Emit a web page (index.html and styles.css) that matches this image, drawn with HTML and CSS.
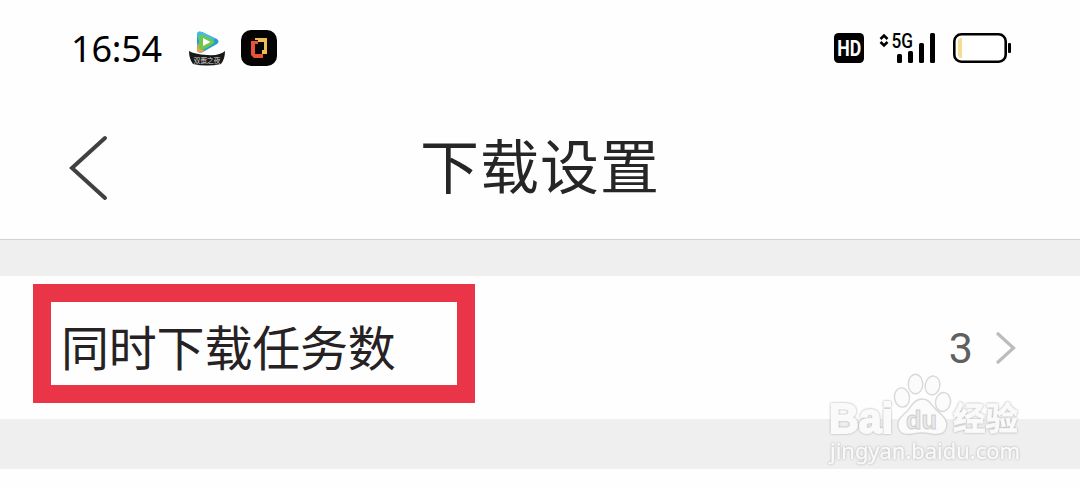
FILE: index.html
```html
<!DOCTYPE html>
<html lang="zh-CN">
<head>
<meta charset="utf-8">
<title>下载设置</title>
<link rel="stylesheet" href="styles.css">
</head>
<body>
<div class="screen">
  <header class="header">
    <div class="status">
      <div class="status-left">
        <span class="time">16:54</span>
        <svg class="app-video" width="40" height="36" viewBox="0 0 40 36">
          <path d="M10 4Q10 -1 15 1L30 8Q33 10.500 30 13L15 21.500Q10 23 10 18Z" fill="#279bd5"/>
          <path d="M10 5Q10 0 15 1L29 8L13 12Z" fill="#42bfe0"/>
          <path d="M11 12L17 20L14 21.500Q10 22 10 18Z" fill="#f1a23d"/>
          <path d="M12 6Q12 3 16 4L27 9.500Q28 11 26 13L18 18Q12 20 12 16Z" fill="#70c64c"/>
          <path d="M16 7L23.500 11L16 15Z" fill="#fff"/>
          <path d="M2 20Q7 23 20 24T38 20Q38 28 34 33Q20 36 6 33Q2 28 2 20Z" fill="#17171a"/>
          <text class="badge-text" x="6.500" y="32" textLength="27">双蛋之夜</text>
        </svg>
        <svg class="app-door" width="36" height="36" viewBox="0 0 36 36">
          <rect width="36" height="36" rx="10" fill="#060303"/>
          <path d="M14 8H26V24H21V20H23V12H17V10H14Z" fill="#efbd58"/>
          <path d="M10 11H17V14H14V24H22V28H13L10 25Z" fill="#e65335"/>
        </svg>
      </div>
      <div class="status-right">
        <svg width="30" height="30" viewBox="0 0 30 30">
          <rect width="30" height="30" rx="4.500"/>
          <text class="hd" x="3.200" y="22.800" textLength="24" lengthAdjust="spacingAndGlyphs">HD</text>
        </svg>
        <svg class="signal" width="58" height="36" viewBox="0 -4 58 36">
          <path d="M1.500 7L5 3.500L8.500 7M1.500 10L5 13.500L8.500 10" fill="none" stroke="#000" stroke-width="2.600"/>
          <text class="net" x="12.500" y="15.500" textLength="21.500" lengthAdjust="spacingAndGlyphs">5G</text>
          <rect x="18" y="22" width="5" height="9" rx="1.500"/>
          <rect x="29" y="19" width="5" height="12" rx="1.500"/>
          <rect x="40" y="11" width="5" height="20" rx="1.500"/>
          <rect x="51" y="1" width="5" height="30" rx="1.500"/>
        </svg>
        <svg class="battery" width="58" height="30" viewBox="0 0 58 30">
          <rect x="1.300" y="1.300" width="51.400" height="27.400" rx="7" fill="#fff" stroke="#000" stroke-width="2.600"/>
          <path d="M9 5V25H8Q5 25 5 21V9Q5 5 8 5Z" fill="#f6dc93"/>
          <rect x="55" y="10" width="3" height="10" rx="1"/>
        </svg>
      </div>
    </div>
    <div class="nav">
      <svg class="back" width="42" height="68" viewBox="0 0 42 68">
        <path d="M39 4L6 34L39 64" fill="none" stroke="#404040" stroke-width="4" stroke-linecap="round"/>
      </svg>
      <h1 class="title">下载设置</h1>
    </div>
  </header>
  <main class="list">
    <div class="row">
      <div class="highlight"><span class="label">同时下载任务数</span></div>
      <div class="value">
        <span class="count">3</span>
        <svg width="22" height="34" viewBox="0 0 22 34">
          <path d="M2 2L18.500 17L2 32" fill="none" stroke="#bcbcbc" stroke-width="3.200"/>
        </svg>
      </div>
    </div>
  </main>
  <footer class="footer"></footer>
  <svg class="watermark" width="210" height="110" viewBox="0 0 210 110">
    <g class="paw">
      <ellipse cx="82" cy="32.500" rx="7.500" ry="9.700" transform="rotate(-8 82 32.500)"/>
      <ellipse cx="95.500" cy="19" rx="7.300" ry="9.700"/>
      <ellipse cx="112.500" cy="20.500" rx="7.300" ry="9.500" transform="rotate(10 112.500 20.500)"/>
      <ellipse cx="123" cy="37" rx="7.500" ry="9.500" transform="rotate(10 123 37)"/>
      <path d="M102 34Q108 34 112 40Q116 45 122 50Q130 58 125 66Q121 71 111 69Q102 67 93 69Q82 71 79 65Q75 57 83 50Q88 46 91 41Q96 34 102 34Z"/>
      <text class="wm-du" x="86" y="63.500" textLength="31" lengthAdjust="spacingAndGlyphs">du</text>
    </g>
    <g class="words">
      <text class="wm-brand" x="9" y="67.500" textLength="64" lengthAdjust="spacingAndGlyphs">Bai</text>
      <text class="wm-cn" x="133" y="64.500" textLength="65" lengthAdjust="spacingAndGlyphs">经验</text>
      <text class="wm-url" x="10" y="94" textLength="190" lengthAdjust="spacingAndGlyphs">jingyan.baidu.com</text>
    </g>
  </svg>
</div>
</body>
</html>
```
FILE: styles.css
```css
* { box-sizing: border-box; }
body { margin: 0; background: #fefefe; font-family: "Noto Sans", "Noto Sans CJK SC", sans-serif; }
.screen { position: relative; width: 1080px; height: 489px; overflow: hidden; display: flex; flex-direction: column; background: #fefefe; }
.header { height: 240px; border-bottom: 1px solid #d2d2d2; }
.status { height: 96px; padding: 0 69px 0 71px; display: flex; justify-content: space-between; align-items: center; }
.status-left, .status-right { display: flex; align-items: center; }
.time { width: 116px; padding-top: 2px; font-size: 36px; line-height: 48px; letter-spacing: -0.2px; color: #000; }
.app-video { margin-top: 2px; }
.app-door { margin-left: 14px; }
.badge-text { font: 7px "Noto Sans CJK SC", sans-serif; fill: #d8d2c8; }
.hd { font: bold 22px Roboto, sans-serif; fill: #fff; }
.signal { margin: 0 0 4px 15px; }
.net { font: 500 21px Roboto, sans-serif; fill: #000; }
.battery { margin-left: 16px; }
.nav { height: 143px; padding: 0 66px; display: grid; grid-template-columns: 42px 1fr 42px; align-items: center; }
.title { margin: 0; padding-bottom: 7px; text-align: center; font: 400 59px/72px "Noto Sans CJK SC", sans-serif; letter-spacing: 1px; color: #262626; }
.list { padding-top: 36px; background: #efefef; }
.row { height: 143px; padding: 8px 63px 16px 33px; display: flex; justify-content: space-between; background: #fefefe; }
.highlight { width: 442px; height: 119px; padding-left: 10px; border: 18px solid #ea3548; display: flex; align-items: center; background: #fefefe; }
.label { font: 400 48px/60px "Noto Sans CJK SC", sans-serif; letter-spacing: -0.2px; color: #262224; padding-top: 3px; }
.value { height: 128px; display: flex; align-items: center; gap: 22px; }
.count { font: 400 43px/50px Roboto, sans-serif; color: #606060; }
.footer { height: 50px; background: #efefef; }
.watermark { position: absolute; left: 820px; top: 365px; }
.paw { fill: #fbfbfb; stroke: #d8d8d8; stroke-width: 1.4; }
.words { fill: #fafafa; stroke: #fafafa; filter: drop-shadow(0 0 0.8px #aaa); }
.wm-brand { font: bold 42px "Liberation Sans", sans-serif; stroke-width: 2; }
.wm-du { font: bold 26px "Liberation Sans", sans-serif; fill: #e9e9e9; stroke: #cfcfcf; stroke-width: 1; }
.wm-cn { font: bold 32px "Noto Sans CJK SC", sans-serif; stroke-width: 0.8; }
.wm-url { font: 22px "Noto Sans", sans-serif; stroke-width: 0.3; }
```
